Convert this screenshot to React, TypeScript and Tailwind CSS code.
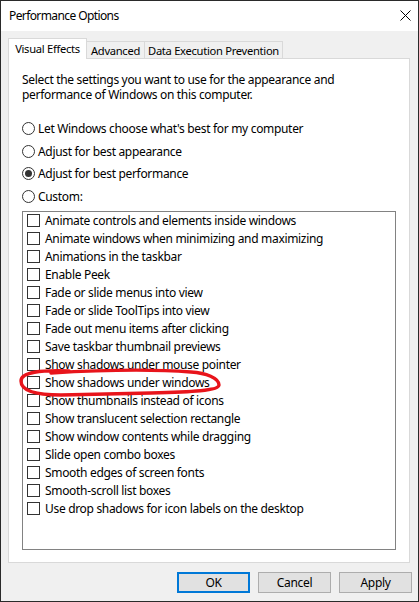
import React from "react";

const items = [
  "Animate controls and elements inside windows",
  "Animate windows when minimizing and maximizing",
  "Animations in the taskbar",
  "Enable Peek",
  "Fade or slide menus into view",
  "Fade or slide ToolTips into view",
  "Fade out menu items after clicking",
  "Save taskbar thumbnail previews",
  "Show shadows under mouse pointer",
  "Show shadows under windows",
  "Show thumbnails instead of icons",
  "Show translucent selection rectangle",
  "Show window contents while dragging",
  "Slide open combo boxes",
  "Smooth edges of screen fonts",
  "Smooth-scroll list boxes",
  "Use drop shadows for icon labels on the desktop",
];

const radios = [
  { label: "Let Windows choose what's best for my computer", on: false },
  { label: "Adjust for best appearance", on: false },
  { label: "Adjust for best performance", on: true },
  { label: "Custom:", on: false },
];

export default function App() {
  return (
    <div
      className="relative w-[419px] h-[602px] border border-[#2a2a2a] bg-[#f0f0f0] flex flex-col text-[12px] tracking-[-0.32px] text-black overflow-hidden"
      style={{ fontFamily: '"Noto Sans", "Open Sans", sans-serif' }}
    >
      {/* Title bar */}
      <div className="h-[30px] bg-white flex items-center justify-between pl-[8px] pr-[6px] shrink-0">
        <span className="leading-[15px] -mt-px whitespace-nowrap tracking-[-0.6px]">Performance Options</span>
        <svg width="11" height="11" viewBox="0 0 11 11" className="mr-[1px] -mt-[1px]">
          <path d="M0.5 0.5 L10.5 10.5 M10.5 0.5 L0.5 10.5" stroke="#000" strokeWidth="1" />
        </svg>
      </div>

      {/* Tabs */}
      <div className="flex items-end mt-[7px] ml-[7px] h-[20px] text-[11.2px] tracking-[-0.3px]">
        <div className="relative z-10 shrink-0 w-[79px] h-[21px] -mb-px bg-white border border-b-0 border-[#d9d9d9] flex items-start justify-center pt-[2px] leading-[15px] whitespace-nowrap">
          Visual Effects
        </div>
        <div className="shrink-0 w-[58px] h-[17px] border-t border-r border-[#d9d9d9] flex items-center justify-center leading-[15px] whitespace-nowrap">
          Advanced
        </div>
        <div className="shrink-0 w-[138px] h-[17px] border-t border-r border-[#d9d9d9] flex items-center justify-center leading-[15px] whitespace-nowrap">
          Data Execution Prevention
        </div>
      </div>

      {/* Panel */}
      <div className="ml-[7px] w-[402px] h-[505px] bg-white border border-[#d9d9d9] flex flex-col pl-[13px] pt-[13px]">
        <p className="leading-[15px] w-[370px]">
          Select the settings you want to use for the appearance and performance of Windows on this computer.
        </p>
        <div className="mt-[15px] flex flex-col">
          {radios.map((r) => (
            <div key={r.label} className="h-[22.7px] flex items-center">
              <span className="w-[13px] h-[13px] rounded-full border border-[#333] flex items-center justify-center shrink-0 bg-white">
                {r.on && <span className="w-[7px] h-[7px] rounded-full bg-[#333]" />}
              </span>
              <span className="ml-[3px] leading-[15px] whitespace-nowrap">{r.label}</span>
            </div>
          ))}
        </div>
        <div className="mt-[3px] w-[374px] h-[339px] border border-[#828282] bg-white flex flex-col pl-[4px] pt-0">
          {items.map((t) => (
            <div key={t} className="h-[18px] flex items-center shrink-0">
              <span className="w-[13px] h-[13px] border border-[#333] bg-white shrink-0" />
              <span className="ml-[5px] leading-[15px] whitespace-nowrap">{t}</span>
            </div>
          ))}
        </div>
      </div>

      {/* Buttons */}
      <div className="flex justify-end gap-[8px] mt-[9px] pr-[6px]">
        <button className="w-[73px] h-[21px] bg-[#e1e1e1] border-2 border-[#0078d7] leading-[15px] flex items-center justify-center">
          OK
        </button>
        <button className="w-[73px] h-[21px] bg-[#e1e1e1] border border-[#adadad] leading-[15px] flex items-center justify-center">
          Cancel
        </button>
        <button className="w-[73px] h-[21px] bg-[#e1e1e1] border border-[#adadad] leading-[15px] flex items-center justify-center">
          Apply
        </button>
      </div>

      {/* Red hand-drawn annotation */}
      <svg
        className="absolute left-0 top-0 pointer-events-none"
        width="419"
        height="602"
        viewBox="0 0 419 602"
      >
        <path
          d="M68 370 C40 369 20 371 20 380 C20 389 32 394 60 394 L150 392 C190 391 218 390 218 384 C218 377 205 372 190 371 C150 368 100 369 50 372"
          fill="none"
          stroke="#e8141b"
          strokeWidth="3.4"
          strokeLinecap="round"
          strokeLinejoin="round"
        />
      </svg>
    </div>
  );
}
